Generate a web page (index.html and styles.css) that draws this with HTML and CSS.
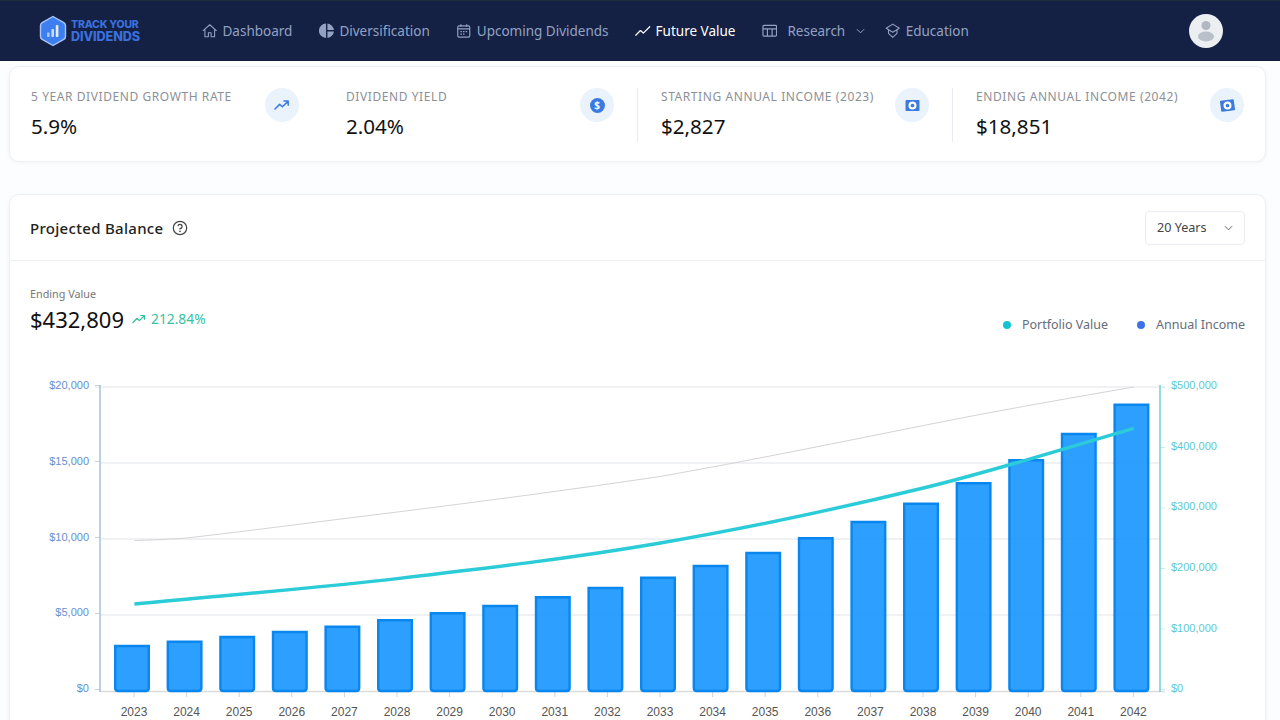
FILE: index.html
```html
<!DOCTYPE html>
<html lang="en">
<head>
<meta charset="utf-8">
<title>Track Your Dividends</title>
<link rel="stylesheet" href="styles.css">
</head>
<body>
<header class="nav">
  <a class="logo">
    <svg class="logo-mark" viewBox="0 0 28 32" width="28" height="32">
      <path d="M14 1.5 24.8 7.600a3.400 3.400 0 0 1 1.700 2.900v11a3.400 3.400 0 0 1-1.700 2.900L14 30.500 3.200 24.400a3.400 3.400 0 0 1-1.700-2.900v-11a3.400 3.400 0 0 1 1.700-2.900z" fill="#3d7ff0" stroke="#a9c6f8" stroke-width="1.400"/>
      <rect x="8" y="17.500" width="2.600" height="4.500" rx=".8" fill="#a9c8fa"/>
      <rect x="12.400" y="14" width="2.600" height="8" rx=".8" fill="#c7dcfc"/>
      <rect x="16.800" y="10" width="2.600" height="12" rx=".8" fill="#e4eefe"/>
    </svg>
    <span class="logo-text"><span class="logo-top">TRACK YOUR</span><span class="logo-bottom">DIVIDENDS</span></span>
  </a>
  <nav class="menu">
    <a class="menu-item">
      <svg class="ico" viewBox="0 0 16 16"><path d="M1.200 7.800 8 1.800l6.800 6M3 6.500v7.700h3.600V10h2.800v4.200H13V6.500" fill="none" stroke="currentColor" stroke-width="1.100" stroke-linejoin="round" stroke-linecap="round"/></svg>
      Dashboard
    </a>
    <a class="menu-item">
      <svg class="ico" viewBox="0 0 16 16"><path d="M7.300.6v14.800A7.400 7.400 0 0 1 7.300.6zM8.700.6a7.400 7.400 0 0 1 6.700 6.700H8.700zM8.700 8.700h6.700a7.400 7.400 0 0 1-6.700 6.700z" fill="currentColor"/></svg>
      Diversification
    </a>
    <a class="menu-item">
      <svg class="ico" viewBox="0 0 16 16"><rect x="1.800" y="3" width="12.400" height="11.500" rx="1.400" fill="none" stroke="currentColor" stroke-width="1.200"/><path d="M1.800 6h12.400M5 1.300v2.600M11 1.300v2.600" stroke="currentColor" stroke-width="1.200"/><path d="M4.500 8.200h1.600v1.400H4.500zM7.200 8.200h1.600v1.400H7.200zM9.900 8.200h1.600v1.400H9.900zM4.500 10.800h1.600v1.400H4.500zM7.200 10.800h1.600v1.400H7.200z" fill="currentColor"/></svg>
      Upcoming Dividends
    </a>
    <a class="menu-item active">
      <svg class="ico" viewBox="0 0 16 16"><path d="M.8 12.600 5.600 7.800l3 2.600 6.600-6.600" fill="none" stroke="currentColor" stroke-width="1.300" stroke-linecap="round" stroke-linejoin="round"/></svg>
      Future Value
    </a>
    <a class="menu-item research">
      <svg class="ico" viewBox="0 0 16 16"><rect x="1" y="2.500" width="14" height="11" rx="1" fill="none" stroke="currentColor" stroke-width="1.200"/><path d="M1 6h14M5.600 6v7.500M10.400 6v7.500" stroke="currentColor" stroke-width="1.200"/></svg>
      <span class="research-label">Research</span>
      <svg class="chev" viewBox="0 0 10 6"><path d="M1 1l4 4 4-4" fill="none" stroke="currentColor" stroke-width="1.100"/></svg>
    </a>
    <a class="menu-item">
      <svg class="ico" viewBox="0 0 16 16"><path d="M8 1.200 14.800 5.400 8 9.600 1.200 5.400zM3.600 7.500v3.200L8 14.800l4.400-4.100V7.500" fill="none" stroke="currentColor" stroke-width="1.100" stroke-linejoin="round"/></svg>
      Education
    </a>
  </nav>
  <div class="avatar">
    <svg viewBox="0 0 34 34" width="34" height="34"><circle cx="17" cy="11.500" r="4.500" fill="#b1b8c2"/><ellipse cx="17" cy="22.500" rx="8" ry="5" fill="#b9c0c9"/></svg>
  </div>
</header>

<main class="page">
  <section class="card stats">
    <div class="stat">
      <div class="stat-text"><div class="stat-label">5 YEAR DIVIDEND GROWTH RATE</div><div class="stat-value">5.9%</div></div>
      <span class="stat-icon"><svg viewBox="0 0 16 16" width="16" height="16"><path d="M1 12l4.600-4.600 2.800 2.400L14 4.400M10 4h4.200v4.200" fill="none" stroke="#3b7be0" stroke-width="1.500" stroke-linejoin="round" stroke-linecap="round"/></svg></span>
    </div>
    <span class="sep sep-none"></span>
    <div class="stat">
      <div class="stat-text"><div class="stat-label">DIVIDEND YIELD</div><div class="stat-value">2.04%</div></div>
      <span class="stat-icon"><span class="dollar">$</span></span>
    </div>
    <span class="sep"></span>
    <div class="stat">
      <div class="stat-text"><div class="stat-label">STARTING ANNUAL INCOME (2023)</div><div class="stat-value">$2,827</div></div>
      <span class="stat-icon"><svg viewBox="0 0 16 14" width="15" height="13"><rect x=".5" y="1" width="15" height="12" rx="1" fill="#3b7be0"/><circle cx="8" cy="7" r="4.300" fill="#fff"/><circle cx="8" cy="7" r="2" fill="#3b7be0"/></svg></span>
    </div>
    <span class="sep"></span>
    <div class="stat">
      <div class="stat-text"><div class="stat-label">ENDING ANNUAL INCOME (2042)</div><div class="stat-value">$18,851</div></div>
      <span class="stat-icon"><svg class="tilt" viewBox="0 0 16 14" width="15" height="13"><rect x=".5" y="1" width="15" height="12" rx="1" fill="#3b7be0"/><circle cx="8" cy="7" r="4.300" fill="#fff"/><circle cx="8" cy="7" r="2" fill="#3b7be0"/></svg></span>
    </div>
  </section>

  <section class="card balance">
    <div class="balance-head">
      <h2 class="balance-title">Projected Balance</h2>
      <svg class="help" viewBox="0 0 16 16" width="16" height="16"><circle cx="8" cy="8" r="6.700" fill="none" stroke="#444" stroke-width="1.200"/><path d="M5.900 6.200A2.100 2.100 0 1 1 8 8.600v1" fill="none" stroke="#444" stroke-width="1.200"/><circle cx="8" cy="11.400" r=".8" fill="#444"/></svg>
      <div class="select">20 Years<svg class="select-chev" viewBox="0 0 10 6"><path d="M1 1l4 4 4-4" fill="none" stroke="#555" stroke-width="1"/></svg></div>
    </div>
    <div class="balance-body">
      <div class="summary">
        <div>
          <div class="summary-label">Ending Value</div>
          <div class="summary-row">
            <span class="summary-value">$432,809</span>
            <svg class="summary-trend" viewBox="0 0 16 16" width="14" height="14"><path d="M1 12l4.600-4.600 2.800 2.400L14 4.400M10 4h4.200v4.200" fill="none" stroke="#2dbf9b" stroke-width="1.400" stroke-linejoin="round" stroke-linecap="round"/></svg>
            <span class="summary-pct">212.84%</span>
          </div>
        </div>
        <div class="legend">
          <span class="legend-item"><i class="dot dot-teal"></i>Portfolio Value</span>
          <span class="legend-item"><i class="dot dot-blue"></i>Annual Income</span>
        </div>
      </div>
      <svg class="chart" viewBox="10 375 1255 345" width="1255" height="345">
        <g class="grid">
          <path d="M95 387H1165M100 463H1160M100 539H1160M100 615H1160"/>
          <path class="grid-base" d="M100 691.500H1165"/>
        </g>
        <g class="ticks-left"><path d="M95 385.500h5M95 461.500h5M95 537.500h5M95 613.500h5M95 689.500h5"/></g>
        <g class="ticks-right"><path d="M1160 387h5M1160 447.500h5M1160 508h5M1160 568.500h5M1160 629h5M1160 689.500h5"/></g>
        <path class="axis-left" d="M100 385V692"/>
        <path class="axis-right" d="M1160 385V692"/>
        <path class="ticks-x" d="M134 692v5M186.600 692v5M239.200 692v5M291.800 692v5M344.400 692v5M397 692v5M449.600 692v5M502.200 692v5M554.800 692v5M607.400 692v5M660 692v5M712.600 692v5M765.200 692v5M817.800 692v5M870.400 692v5M923 692v5M975.600 692v5M1028.200 692v5M1080.800 692v5M1133.400 692v5"/>
        <g class="bars">
          <path d="M115.200 646h33.600v42q0 3-3 3h-27.600q-3 0-3-3z"/>
          <path d="M167.800 641.700h33.600v46.300q0 3-3 3h-27.600q-3 0-3-3z"/>
          <path d="M220.400 637h33.600v51q0 3-3 3h-27.600q-3 0-3-3z"/>
          <path d="M273 632h33.600v56q0 3-3 3H276q-3 0-3-3z"/>
          <path d="M325.600 626.700h33.600v61.300q0 3-3 3h-27.600q-3 0-3-3z"/>
          <path d="M378.200 620.300h33.600v67.700q0 3-3 3h-27.600q-3 0-3-3z"/>
          <path d="M430.800 613.300h33.600v74.700q0 3-3 3h-27.600q-3 0-3-3z"/>
          <path d="M483.400 606H517v82q0 3-3 3h-27.600q-3 0-3-3z"/>
          <path d="M536 597.300h33.600v90.700q0 3-3 3H539q-3 0-3-3z"/>
          <path d="M588.600 588h33.600v100q0 3-3 3h-27.600q-3 0-3-3z"/>
          <path d="M641.200 577.700h33.600v110.300q0 3-3 3h-27.600q-3 0-3-3z"/>
          <path d="M693.800 566h33.600v122q0 3-3 3h-27.600q-3 0-3-3z"/>
          <path d="M746.400 553H780v135q0 3-3 3h-27.600q-3 0-3-3z"/>
          <path d="M799 538.300h33.600v149.700q0 3-3 3H802q-3 0-3-3z"/>
          <path d="M851.600 522h33.600v166q0 3-3 3h-27.600q-3 0-3-3z"/>
          <path d="M904.200 503.700h33.600v184.300q0 3-3 3h-27.600q-3 0-3-3z"/>
          <path d="M956.800 483.300h33.600v204.700q0 3-3 3h-27.600q-3 0-3-3z"/>
          <path d="M1009.400 460.300H1043v227.700q0 3-3 3h-27.600q-3 0-3-3z"/>
          <path d="M1062 434h33.600v254q0 3-3 3H1065q-3 0-3-3z"/>
          <path d="M1114.600 404.700h33.600v283.300q0 3-3 3h-27.600q-3 0-3-3z"/>
        </g>
        <path class="line-grey" d="M134.400 540.500Q162 540 187 538C257 530 327 520.500 397.400 512C485 501 572 489.500 660.400 476.500C748 461 836 443 923.400 425.500C993 411.500 1064 399 1133.800 387"/>
        <path class="line-teal" d="M134.400 604C222 595.500 309.700 588.800 397.400 578.600C485.100 568.400 572.700 558.100 660.400 543C748.100 527.900 835.700 509.200 923.400 488C993.500 471 1063.700 448.600 1133.800 428.300"/>
        <g class="labels-left">
          <text x="89" y="388.500">$20,000</text>
          <text x="89" y="464.500">$15,000</text>
          <text x="89" y="540.500">$10,000</text>
          <text x="89" y="616">$5,000</text>
          <text x="89" y="691.500">$0</text>
        </g>
        <g class="labels-right">
          <text x="1171" y="388.500">$500,000</text>
          <text x="1171" y="449.500">$400,000</text>
          <text x="1171" y="510">$300,000</text>
          <text x="1171" y="570.500">$200,000</text>
          <text x="1171" y="631.500">$100,000</text>
          <text x="1171" y="691.500">$0</text>
        </g>
        <g class="labels-x">
          <text x="134" y="715.500">2023</text><text x="186.600" y="715.500">2024</text><text x="239.200" y="715.500">2025</text><text x="291.800" y="715.500">2026</text><text x="344.400" y="715.500">2027</text><text x="397" y="715.500">2028</text><text x="449.600" y="715.500">2029</text><text x="502.200" y="715.500">2030</text><text x="554.800" y="715.500">2031</text><text x="607.400" y="715.500">2032</text><text x="660" y="715.500">2033</text><text x="712.600" y="715.500">2034</text><text x="765.200" y="715.500">2035</text><text x="817.800" y="715.500">2036</text><text x="870.400" y="715.500">2037</text><text x="923" y="715.500">2038</text><text x="975.600" y="715.500">2039</text><text x="1028.200" y="715.500">2040</text><text x="1080.800" y="715.500">2041</text><text x="1133.400" y="715.500">2042</text>
        </g>
      </svg>
    </div>
  </section>
</main>
</body>
</html>
```
FILE: styles.css
```css
* { box-sizing: border-box; }
html, body { margin: 0; height: 720px; overflow: hidden; }
body { background: #fcfdfe; font-family: "Noto Sans", "Open Sans", sans-serif; color: #111; }

.nav {
  height: 61px;
  background: #142145;
  border-top: 1px solid #1c2c3a;
  border-bottom: 1px solid #0f1a38;
  display: flex;
  align-items: center;
  padding: 0 57px 0 39px;
}
.logo { display: flex; align-items: center; gap: 4px; width: 163px; flex: none; }
.logo-mark { flex: none; }
.logo-text { display: flex; flex-direction: column; font-family: "Inter", "Noto Sans", sans-serif; font-weight: 800; color: #3a70dc; }
.logo-top { font-size: 10.5px; line-height: 11px; letter-spacing: -.2px; white-space: nowrap; }
.logo-bottom { font-size: 12.6px; line-height: 13px; letter-spacing: -.1px; }

.menu { display: flex; align-items: center; gap: 26.5px; font-size: 13.5px; color: #93a1c2; }
.menu-item { display: flex; align-items: center; gap: 5px; white-space: nowrap; }
.menu-item.active { color: #fff; }
.ico { width: 15.5px; height: 15.5px; flex: none; }
.research { margin-right: -6.5px; }
.research-label { margin-left: 5px; }
.chev { width: 9px; height: 6px; margin-left: 6px; }

.avatar { margin-left: auto; width: 34px; height: 34px; border-radius: 50%; background: #eceff2; overflow: hidden; }
.avatar svg { display: block; }

.page { padding: 5px 14px 0 9px; display: flex; flex-direction: column; gap: 32px; }
.card { background: #fff; border: 1px solid #edf0f4; border-radius: 10px; box-shadow: 0 1px 4px rgba(40, 60, 100, .05); }

.stats { height: 96px; display: flex; padding: 21px 21px 0; }
.stat { width: 268px; flex: none; display: flex; justify-content: space-between; align-items: flex-start; }
.sep { width: 1px; height: 54px; margin: 0 23px; background: #e8ebef; flex: none; }
.sep-none { background: transparent; }
.stat-label { font-size: 12px; line-height: 18px; letter-spacing: .58px; color: #8b9097; white-space: nowrap; }
.stat-value { font-size: 20.6px; line-height: 28px; margin-top: 6px; color: #111; }
.stat-icon { width: 34px; height: 34px; border-radius: 50%; background: #eaf2fc; display: flex; align-items: center; justify-content: center; flex: none; }
.dollar { width: 15px; height: 15px; border-radius: 50%; background: #3b7be0; color: #fff; font-size: 10px; font-weight: 700; line-height: 15px; text-align: center; }
.tilt { transform: rotate(-8deg); }

.balance { height: 540px; overflow: hidden; }
.balance-head { height: 66px; border-bottom: 1px solid #eef1f4; display: flex; align-items: center; padding: 0 20px; }
.balance-title { margin: 0; font-size: 15px; font-weight: 500; letter-spacing: .3px; color: #222; }
.help { margin-left: 9px; }
.select { margin-left: auto; width: 100px; height: 34px; border: 1px solid #e9ecf0; border-radius: 4px; display: flex; align-items: center; justify-content: space-between; padding: 0 11px; font-size: 12.6px; color: #444; }
.select-chev { width: 9px; height: 6px; }

.balance-body { padding: 26px 0 0; }
.summary { display: flex; justify-content: space-between; align-items: flex-start; padding: 0 20px; height: 88px; }
.summary-label { font-size: 10.8px; line-height: 14px; color: #777; }
.summary-row { display: flex; align-items: center; margin-top: 3px; height: 30px; }
.summary-value { font-size: 22px; color: #111; }
.summary-trend { margin-left: 8px; }
.summary-pct { font-size: 13.8px; color: #37c3a0; margin-left: 5px; padding-bottom: 1px; }
.legend { display: flex; gap: 29px; font-size: 12.5px; color: #666d78; padding-top: 29px; }
.legend-item { display: flex; align-items: center; gap: 11px; }
.dot { width: 8px; height: 8px; border-radius: 50%; }
.dot-teal { background: #14c3d3; }
.dot-blue { background: #3d72e6; }

.chart { display: block; }
.grid path { fill: none; stroke: #e0e3e8; stroke-width: 1; }
.grid .grid-base { stroke: #dcdcdc; stroke-width: 1.5; }
.ticks-left path { fill: none; stroke: #c9d2dc; }
.ticks-right path { fill: none; stroke: #cde9ec; }
.ticks-x { fill: none; stroke: #d5d5d5; }
.axis-left { stroke: #a4c1d8; stroke-width: 1.5; fill: none; }
.axis-right { stroke: #72cfd6; stroke-width: 1.5; fill: none; }
.bars path { fill: #1595ff; fill-opacity: .9; stroke: #0a87ee; stroke-width: 2.4; }
.line-grey { fill: none; stroke: #d4d4d4; stroke-width: 1; }
.line-teal { fill: none; stroke: #2ccbd8; stroke-width: 3.4; stroke-linejoin: round; }
.labels-left text, .labels-right text, .labels-x text { font-family: "Liberation Sans", Arial, sans-serif; }
.labels-left text { font-size: 11px; fill: #6690d0; text-anchor: end; }
.labels-right text { font-size: 11px; fill: #5fc8cf; }
.labels-x text { font-size: 12px; fill: #555; text-anchor: middle; }
```
